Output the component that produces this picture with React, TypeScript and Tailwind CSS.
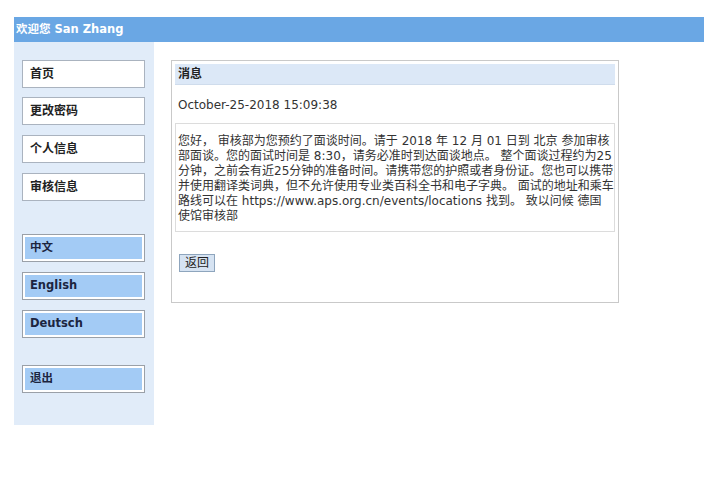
import React from "react";

const font = { fontFamily: '"DejaVu Sans", "Noto Sans CJK SC", sans-serif' };

function NavBtn({ label, className = "" }: { label: string; className?: string }) {
  return (
    <div
      className={`ml-[8px] w-[123px] h-[28px] bg-white border border-[#aab3bf] flex items-center pl-[7px] text-[12px] font-bold text-[#222] ${className}`}
    >
      {label}
    </div>
  );
}

function LangBtn({ label, className = "" }: { label: string; className?: string }) {
  return (
    <div className={`ml-[8px] w-[123px] h-[28px] bg-white border border-[#9aa0a8] p-[2px] ${className}`}>
      <div className="w-full h-full bg-[#a3cbf5] flex items-center pl-[5px] text-[11.5px] font-bold text-[#1c2540]">
        {label}
      </div>
    </div>
  );
}

const lines = [
  "您好， 审核部为您预约了面谈时间。请于 2018 年 12 月 01 日到 北京 参加审核",
  "部面谈。您的面试时间是 8:30，请务必准时到达面谈地点。 整个面谈过程约为25",
  "分钟，之前会有近25分钟的准备时间。请携带您的护照或者身份证。您也可以携带",
  "并使用翻译类词典，但不允许使用专业类百科全书和电子字典。 面试的地址和乘车",
  "路线可以在 https://www.aps.org.cn/events/locations 找到。 致以问候 德国",
  "使馆审核部",
];

export default function App() {
  return (
    <div className="w-[724px] h-[482px] bg-white overflow-hidden" style={font}>
      <div className="pt-[17px] pl-[14px]">
        <div className="w-[690px] h-[25px] bg-[#6aa7e4] flex items-center pl-[2px] text-white font-bold text-[11.5px]">
          欢迎您 San Zhang
        </div>
        <div className="flex">
          <div className="w-[140px] h-[383px] bg-[#e1ecf9] flex flex-col">
            <NavBtn label="首页" className="mt-[18px]" />
            <NavBtn label="更改密码" className="mt-[9px]" />
            <NavBtn label="个人信息" className="mt-[10px]" />
            <NavBtn label="审核信息" className="mt-[10px]" />
            <LangBtn label="中文" className="mt-[33px]" />
            <LangBtn label="English" className="mt-[10px]" />
            <LangBtn label="Deutsch" className="mt-[10px]" />
            <LangBtn label="退出" className="mt-[27px]" />
          </div>
          <div className="ml-[17px] mt-[18px] w-[448px] h-[243px] border border-[#c9c9c9] p-[3px] flex flex-col">
            <div className="h-[21px] bg-[#dce8f7] border-b border-[#cfdcec] flex items-center pl-[3px] text-[12px] font-bold text-[#222]">
              消息
            </div>
            <div className="mt-[13px] pl-[3px] text-[12px] leading-[14px] text-[#333]">
              October-25-2018 15:09:38
            </div>
            <div className="mt-[11px] border border-[#dcdcdc] pt-[10px] pb-[7px] pl-[2px] text-[12px] leading-[15px] text-[#333]">
              {lines.map((l, i) => (
                <div key={i} className="whitespace-nowrap">
                  {l}
                </div>
              ))}
            </div>
            <div className="mt-[22px] ml-[4px]">
              <div className="w-[36px] h-[18px] bg-[#d6e3f2] border border-[#8ea5bd] flex items-center justify-center text-[12px] text-[#222]">
                返回
              </div>
            </div>
          </div>
        </div>
      </div>
    </div>
  );
}
